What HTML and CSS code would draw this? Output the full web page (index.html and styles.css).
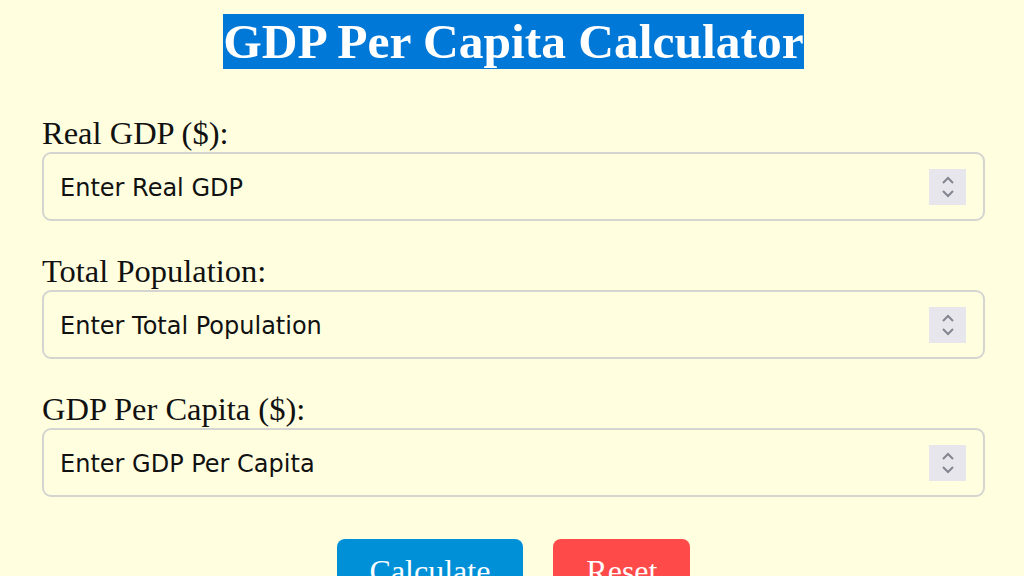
FILE: index.html
```html
<!DOCTYPE html>
<html lang="en">
<head>
    <meta charset="UTF-8">
    <meta name="viewport" content="width=device-width, initial-scale=1.0">
    <title>GDP Per Capita Calculator</title>
    <link rel="stylesheet" href="styles.css">
</head>
<body>

<div id="wrapper">
    <h1><span class="title">GDP Per Capita Calculator</span></h1>

    <div class="field">
        <label for="gdp">Real GDP ($):</label>
        <div class="input-box">
            <input type="text" id="gdp" placeholder="Enter Real GDP">
            <span class="spin"><svg width="14" height="24" viewBox="0 0 14 24"><path d="M2 8l5-5 5 5M2 16l5 5 5-5" fill="none" stroke="#85858f" stroke-width="2"/></svg></span>
        </div>
    </div>

    <div class="field">
        <label for="population">Total Population:</label>
        <div class="input-box">
            <input type="text" id="population" placeholder="Enter Total Population">
            <span class="spin"><svg width="14" height="24" viewBox="0 0 14 24"><path d="M2 8l5-5 5 5M2 16l5 5 5-5" fill="none" stroke="#85858f" stroke-width="2"/></svg></span>
        </div>
    </div>

    <div class="field">
        <label for="percapita">GDP Per Capita ($):</label>
        <div class="input-box">
            <input type="text" id="percapita" placeholder="Enter GDP Per Capita">
            <span class="spin"><svg width="14" height="24" viewBox="0 0 14 24"><path d="M2 8l5-5 5 5M2 16l5 5 5-5" fill="none" stroke="#85858f" stroke-width="2"/></svg></span>
        </div>
    </div>

    <div class="buttons">
        <button class="btn btn-calc">Calculate</button>
        <button class="btn btn-reset">Reset</button>
    </div>
</div>

</body>
</html>
```

FILE: styles.css
```css
html, body {
    margin: 0;
    padding: 0;
    background-color: #ffffe0;
}
#wrapper {
    padding: 0 39px 0 42px;
    font-family: "Liberation Serif", "Times New Roman", serif;
    color: #111;
}
h1 {
    margin: 15px 0 48px;
    text-align: center;
    font-size: 49.5px;
    font-weight: bold;
    line-height: 54px;
}
h1 .title {
    background-color: #0078d7;
    color: #fff;
}
.field {
    margin-bottom: 34px;
}
.field label {
    display: block;
    font-size: 32.5px;
    line-height: 32px;
    margin-bottom: 3px;
}
.input-box {
    display: flex;
    align-items: center;
    height: 69px;
    box-sizing: border-box;
    border: 2px solid #d4d4d0;
    border-radius: 9px;
    padding: 0 17px 0 16px;
}
.input-box input {
    flex: 1;
    border: none;
    outline: none;
    background: transparent;
    padding: 3px 0 0;
    font-family: "DejaVu Sans", Verdana, sans-serif;
    font-size: 24px;
    color: #111;
}
.input-box input::placeholder {
    color: #111;
    opacity: 1;
}
.spin {
    display: flex;
    align-items: center;
    justify-content: center;
    width: 37px;
    height: 36px;
    background-color: #e6e6ec;
}
.buttons {
    display: flex;
    justify-content: center;
    gap: 30px;
    margin-top: 42px;
}
.btn {
    font-family: "Liberation Serif", "Times New Roman", serif;
    font-size: 32px;
    color: #fff;
    border: none;
    border-radius: 8px;
    padding: 14px 33px;
    cursor: pointer;
}
.btn-calc {
    background-color: #0090d8;
}
.btn-reset {
    background-color: #ff4a4a;
}
```
